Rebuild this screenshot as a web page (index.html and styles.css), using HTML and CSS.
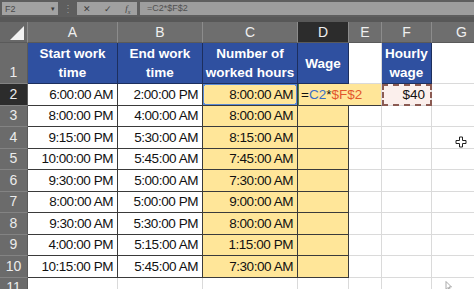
FILE: index.html
```html
<!DOCTYPE html>
<html lang="en">
<head>
<meta charset="UTF-8" />
<title>Wage sheet</title>
<link rel="stylesheet" href="styles.css">
</head>
<body>

<div class="formula-bar">
  <div class="name-box"><span>F2</span><span class="drop">&#9662;</span></div>
  <div class="grip">&#8942;</div>
  <div class="fx-buttons">
    <span>&#10005;</span>
    <span>&#10003;</span>
    <span class="fx">f<sub>x</sub></span>
  </div>
  <div class="formula-input">=C2*$F$2</div>
</div>
<div class="bar-gap"></div>

<table class="sheet">
  <colgroup>
    <col class="w-rh"><col class="w-a"><col class="w-b"><col class="w-c"><col class="w-d"><col class="w-e"><col class="w-f"><col class="w-g">
  </colgroup>
  <tr class="cols">
    <th class="corner"><svg width="14" height="14" viewBox="0 0 14 14"><polygon points="14,0 14,14 0,14" fill="#f2f2f2"/></svg></th>
    <th>A</th><th>B</th><th>C</th><th class="sel">D</th><th>E</th><th>F</th><th>G</th>
  </tr>
  <tr class="r1">
    <th class="rh">1</th>
    <td class="hd">Start work<br>time</td>
    <td class="hd">End work<br>time</td>
    <td class="hd">Number of<br>worked hours</td>
    <td class="hd">Wage</td>
    <td></td>
    <td class="hd">Hourly<br>wage</td>
    <td></td>
  </tr>
  <tr>
    <th class="rh sel">2</th>
    <td class="tm dk">6:00:00 AM</td>
    <td class="tm dk">2:00:00 PM</td>
    <td class="tm dk y ref">8:00:00 AM<span class="handles"><i class="h1"></i><i class="h2"></i><i class="h3"></i><i class="h4"></i></span></td>
    <td class="edit" colspan="2">=<span class="c-ref">C2</span>*<span class="f-ref">$F$2</span></td>
    <td class="tm copy">$40</td>
    <td></td>
  </tr>
  <tr><th class="rh">3</th><td class="tm dk">8:00:00 PM</td><td class="tm dk">4:00:00 AM</td><td class="tm dk y">8:00:00 AM</td><td class="dk y"></td><td></td><td></td><td></td></tr>
  <tr><th class="rh">4</th><td class="tm dk">9:15:00 PM</td><td class="tm dk">5:30:00 AM</td><td class="tm dk y">8:15:00 AM</td><td class="dk y"></td><td></td><td></td><td></td></tr>
  <tr><th class="rh">5</th><td class="tm dk">10:00:00 PM</td><td class="tm dk">5:45:00 AM</td><td class="tm dk y">7:45:00 AM</td><td class="dk y"></td><td></td><td></td><td></td></tr>
  <tr><th class="rh">6</th><td class="tm dk">9:30:00 PM</td><td class="tm dk">5:00:00 AM</td><td class="tm dk y">7:30:00 AM</td><td class="dk y"></td><td></td><td></td><td></td></tr>
  <tr><th class="rh">7</th><td class="tm dk">8:00:00 AM</td><td class="tm dk">5:00:00 PM</td><td class="tm dk y">9:00:00 AM</td><td class="dk y"></td><td></td><td></td><td></td></tr>
  <tr><th class="rh">8</th><td class="tm dk">9:30:00 AM</td><td class="tm dk">5:30:00 PM</td><td class="tm dk y">8:00:00 AM</td><td class="dk y"></td><td></td><td></td><td></td></tr>
  <tr><th class="rh">9</th><td class="tm dk">4:00:00 PM</td><td class="tm dk">5:15:00 AM</td><td class="tm dk y">1:15:00 PM</td><td class="dk y"></td><td></td><td></td><td></td></tr>
  <tr><th class="rh">10</th><td class="tm dk">10:15:00 PM</td><td class="tm dk">5:45:00 AM</td><td class="tm dk y">7:30:00 AM</td><td class="dk y"></td><td></td><td></td><td></td></tr>
  <tr><th class="rh">11</th><td></td><td></td><td></td><td></td><td></td><td></td><td></td></tr>
</table>

<svg class="cross-cursor" width="12" height="12" viewBox="0 0 12 12">
  <path d="M4.5 1h3v3.5H11v3H7.5V11h-3V7.5H1v-3h3.5z" fill="#fff" stroke="#222" stroke-width="1" stroke-linejoin="round"/>
</svg>
<svg class="arrow-cursor" width="8" height="10" viewBox="0 0 8 10">
  <path d="M1 0.5v8l2-2 1.5 3 1-0.5-1.5-3h2.5z" fill="#fff" stroke="#888" stroke-width="0.7"/>
</svg>

</body>
</html>
```

FILE: styles.css
```css
body {
  margin: 0;
  background: #ffffff;
  font-family: "Liberation Sans", Arial, sans-serif;
  overflow: hidden;
  position: relative;
  height: 289px;
}

/* formula bar */
.formula-bar {
  display: flex;
  align-items: center;
  height: 17px;
  padding: 0 0 0 2px;
  background: #5e5e5e;
  font-size: 9px;
  color: #4a4a4a;
}

.name-box {
  display: flex;
  justify-content: space-between;
  align-items: center;
  width: 50px;
  height: 13px;
  padding: 0 3px;
  background: #a2a2a2;
}

.drop {
  font-size: 7px;
  color: #3a3a3a;
}

.grip {
  width: 19px;
  text-align: center;
  color: #9a9a9a;
  font-size: 10px;
}

.fx-buttons {
  display: flex;
  justify-content: space-around;
  align-items: center;
  width: 60px;
  height: 13px;
  background: #a0a0a0;
  color: #3e3e3e;
  font-size: 9px;
}

.fx {
  font-family: "Liberation Serif", serif;
  font-style: italic;
  font-size: 9px;
}

.fx sub {
  font-size: 6px;
}

.formula-input {
  flex: 1;
  height: 13px;
  line-height: 13px;
  margin-left: 3px;
  padding-left: 7px;
  background: #9d9d9d;
  color: #505050;
}

.bar-gap {
  height: 5px;
  background: #585858;
}

/* sheet grid */
.sheet {
  table-layout: fixed;
  border-collapse: separate;
  border-spacing: 0;
  width: 492px;
  font-size: 13.5px;
  letter-spacing: -0.45px;
}

.w-rh { width: 28px; }
.w-a { width: 90px; }
.w-b { width: 85px; }
.w-c { width: 95px; }
.w-d { width: 51px; }
.w-e { width: 33px; }
.w-f { width: 50px; }
.w-g { width: 60px; }

.sheet td {
  padding: 0 4px 0 0;
  border-right: 1px solid #dadada;
  border-bottom: 1px solid #dadada;
  white-space: nowrap;
  overflow: hidden;
  color: #111;
}

.sheet tr { height: 21.5px; }
.sheet tr.cols { height: 21px; }
.sheet tr.r1 { height: 41px; }

.cols th {
  background: #6e6e6e;
  color: #efefef;
  font-weight: normal;
  font-size: 14px;
  letter-spacing: 0;
  border-right: 1px solid #8c8c8c;
  border-bottom: 1px solid #5a5a5a;
  padding: 0;
}

.cols th.sel {
  background: #2c2c2c;
}

.cols th.corner {
  background: #686868;
  text-align: right;
  vertical-align: bottom;
  padding: 0 3px 2px 0;
  line-height: 0;
}

.rh {
  background: #6b6b6b;
  color: #ececec;
  font-weight: normal;
  font-size: 14px;
  letter-spacing: 0;
  text-align: center;
  vertical-align: bottom;
  padding: 0 0 3px;
  border-right: 1px solid #5a5a5a;
  border-bottom: 1px solid #838383;
}

.rh.sel {
  background: #2c2c2c;
}

.sheet td.hd {
  background: #2f50a0;
  color: #ffffff;
  font-weight: bold;
  font-size: 13.5px;
  letter-spacing: 0;
  line-height: 19px;
  text-align: center;
  padding: 0;
  border-right: 1px solid #1d2f5e;
  border-bottom: 1px solid #1d2f5e;
}

.sheet td.dk {
  border-right-color: #3a3a3a;
  border-bottom-color: #3a3a3a;
}

.tm {
  text-align: right;
}

.y {
  background: #ffe699;
}

.ref {
  position: relative;
  box-shadow: inset 0 0 0 1px #5c8bd6;
}

.handles i {
  position: absolute;
  width: 3px;
  height: 3px;
  background: #5c8bd6;
}

.handles .h1 { left: -1px; top: -1px; }
.handles .h2 { right: -1px; top: -1px; }
.handles .h3 { left: -1px; bottom: -1px; }
.handles .h4 { right: -1px; bottom: -1px; }

.sheet td.edit {
  background: #ffe699;
  padding-left: 2px;
  border-left: 1px solid #4f7f4f;
  border-bottom-color: #3a3a3a;
  font-size: 13.5px;
  letter-spacing: 0;
}

.c-ref { color: #3d6fc4; }
.f-ref { color: #e2562c; }

.sheet td.copy {
  background: #fbefec;
  outline: 2px dashed #8a5a52;
  outline-offset: -2px;
  padding-right: 6px;
  letter-spacing: 0;
}

/* overlays */
.cross-cursor {
  position: absolute;
  left: 455px;
  top: 136px;
}

.arrow-cursor {
  position: absolute;
  left: 445px;
  top: 281px;
}
```
